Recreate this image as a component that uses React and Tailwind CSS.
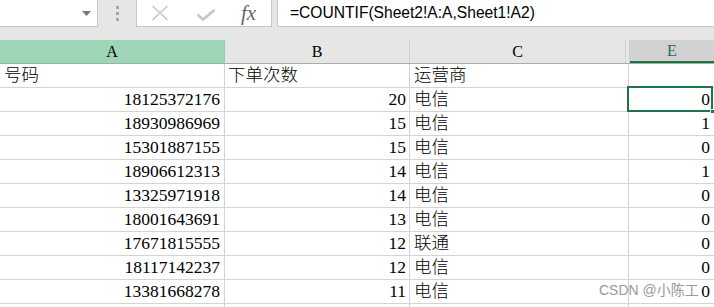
import React from "react";

const rows = [
  ["18125372176", "20", "电信", "0"],
  ["18930986969", "15", "电信", "1"],
  ["15301887155", "15", "电信", "0"],
  ["18906612313", "14", "电信", "1"],
  ["13325971918", "14", "电信", "0"],
  ["18001643691", "13", "电信", "0"],
  ["17671815555", "12", "联通", "0"],
  ["18117142237", "12", "电信", "0"],
  ["13381668278", "11", "电信", "0"],
  ["", "", "", ""],
];

const cellFont = { fontFamily: '"Liberation Serif", "Noto Sans CJK SC", serif' };

export default function App() {
  return (
    <div className="w-[714px] h-[307px] overflow-hidden bg-white relative select-none">
      {/* formula bar */}
      <div className="h-[40px] bg-[#e6e6e6] flex items-start">
        <div className="w-[98px] h-[27px] bg-white border-r border-b border-[#c6c6c6] flex items-center justify-end pr-[6px]">
          <svg width="9" height="5" viewBox="0 0 9 5">
            <path d="M0 0 L9 0 L4.5 5 Z" fill="#777" />
          </svg>
        </div>
        <div className="w-[38px] h-[27px] flex items-center justify-center">
          <div className="flex flex-col gap-[3px]">
            <div className="w-[3px] h-[3px] bg-[#a6a6a6]" />
            <div className="w-[3px] h-[3px] bg-[#a6a6a6]" />
            <div className="w-[3px] h-[3px] bg-[#a6a6a6]" />
          </div>
        </div>
        <div className="w-[136px] h-[27px] bg-white border-l border-r border-b border-[#c6c6c6] flex items-center">
          <svg className="ml-[14px]" width="18" height="16" viewBox="0 0 18 16">
            <path d="M1.5 1 L16.5 15 M16.5 1 L1.5 15" stroke="#c8c8c8" strokeWidth="1.6" fill="none" />
          </svg>
          <svg className="ml-[27px] mt-[4px]" width="20" height="12" viewBox="0 0 20 12">
            <path d="M1.5 5.5 L7 10.5 L18.5 1" stroke="#c8c8c8" strokeWidth="2.8" fill="none" />
          </svg>
          <span
            className="ml-[25px] text-[21px] italic text-[#666666] leading-none"
            style={{ fontFamily: '"Liberation Serif", serif' }}
          >
            fx
          </span>
        </div>
        <div className="ml-[5px] flex-1 h-[27px] bg-white border-l border-b border-[#c6c6c6] flex items-center pl-[12px]">
          <span className="text-[15.6px] text-black" style={{ fontFamily: '"Liberation Sans", sans-serif' }}>
            =COUNTIF(Sheet2!A:A,Sheet1!A2)
          </span>
        </div>
      </div>

      {/* column headers */}
      <div
        className="h-[24px] flex bg-[#e6e6e6] border-b border-[#ababab] text-[16px] text-black"
        style={cellFont}
      >
        <div className="w-[225px] bg-[#9fd5b7] border-r border-[#9fc9ae] flex items-center justify-center">A</div>
        <div className="w-[185px] border-r border-[#cfcfcf] flex items-center justify-center">B</div>
        <div className="w-[216px] border-r border-[#cfcfcf] flex items-center justify-center">C</div>
        <div className="w-[4px] border-r border-[#cfcfcf]" />
        <div className="flex-1 bg-[#d2d2d2] border-b-2 border-[#217346] flex items-center justify-center text-[#217346]">
          E
        </div>
      </div>

      {/* data */}
      <div className="text-[17.5px] text-black" style={cellFont}>
        <div className="h-[24px] flex border-b border-[#d4d4d4] font-light">
          <div className="w-[225px] border-r border-[#d4d4d4] pl-[4px] flex items-center">号码</div>
          <div className="w-[185px] border-r border-[#d4d4d4] pl-[3px] flex items-center">下单次数</div>
          <div className="w-[219px] border-r border-[#d4d4d4] pl-[4px] flex items-center">运营商</div>
          <div className="flex-1" />
        </div>
        {rows.map((r, i) => (
          <div key={i} className="h-[24px] flex border-b border-[#d4d4d4]">
            <div className="w-[225px] border-r border-[#d4d4d4] pr-[4px] flex items-center justify-end">{r[0]}</div>
            <div className="w-[185px] border-r border-[#d4d4d4] pr-[3px] flex items-center justify-end">{r[1]}</div>
            <div className="w-[219px] border-r border-[#d4d4d4] pl-[4px] flex items-center font-light">{r[2]}</div>
            <div className="flex-1 pr-[4px] flex items-center justify-end relative">
              {r[3]}
              {i === 0 && (
                <>
                  <div className="absolute -left-[2px] -top-[2px] right-[1px] -bottom-[1px] border-2 border-[#217346]" />
                  <div className="absolute -right-[1px] -bottom-[3px] w-[5px] h-[5px] bg-[#217346] border border-white" />
                </>
              )}
            </div>
          </div>
        ))}
      </div>

      {/* watermark */}
      <div
        className="absolute left-[599px] top-[280px] text-[14px] text-[#9a9a9a] whitespace-nowrap"
        style={{ fontFamily: '"Liberation Sans", "Noto Sans CJK SC", sans-serif' }}
      >
        CSDN @小陈工
      </div>
    </div>
  );
}
